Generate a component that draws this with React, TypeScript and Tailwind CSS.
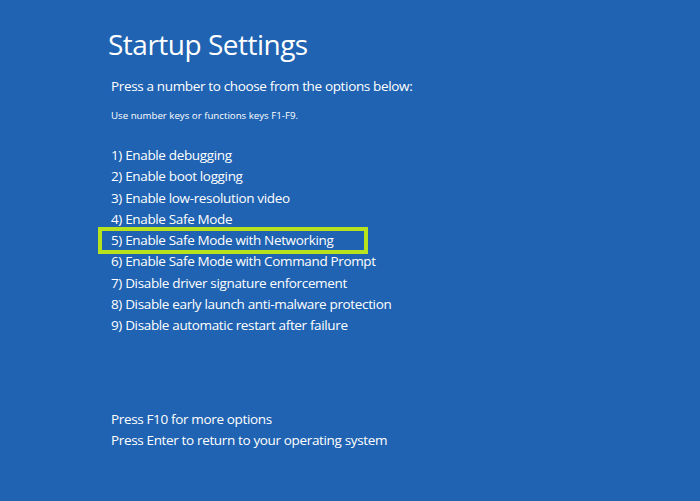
const options = [
  '1) Enable debugging',
  '2) Enable boot logging',
  '3) Enable low-resolution video',
  '4) Enable Safe Mode',
  '5) Enable Safe Mode with Networking',
  '6) Enable Safe Mode with Command Prompt',
  '7) Disable driver signature enforcement',
  '8) Disable early launch anti-malware protection',
  '9) Disable automatic restart after failure',
]

export default function App() {
  return (
    <div className="w-[700px] h-[501px] bg-[#1f63b2] text-white font-['Open_Sans',sans-serif] overflow-hidden">
      <div className="pl-[108px] pt-[26px]">
        <h1 className="text-[28px] leading-[36px] font-normal tracking-[-0.5px]">Startup Settings</h1>
        <div className="pl-[3px] text-[13.5px] tracking-[-0.35px]">
          <p className="mt-[14px] leading-[20px]">Press a number to choose from the options below:</p>
          <p className="mt-[13px] text-[9.7px] leading-[14px] tracking-normal">Use number keys or functions keys F1-F9.</p>
          <ul className="mt-[22px] flex flex-col leading-[21.3px]">
            {options.map((o, i) => (
              <li key={o} className="relative">
                {i === 4 && (
                  <span className="absolute left-[-13px] top-[-3px] w-[270px] h-[27px] border-4 border-[#b6e31e]" />
                )}
                <span className="relative">{o}</span>
              </li>
            ))}
          </ul>
          <p className="mt-[72px] leading-[21px]">Press F10 for more options</p>
          <p className="leading-[21px]">Press Enter to return to your operating system</p>
        </div>
      </div>
    </div>
  )
}
